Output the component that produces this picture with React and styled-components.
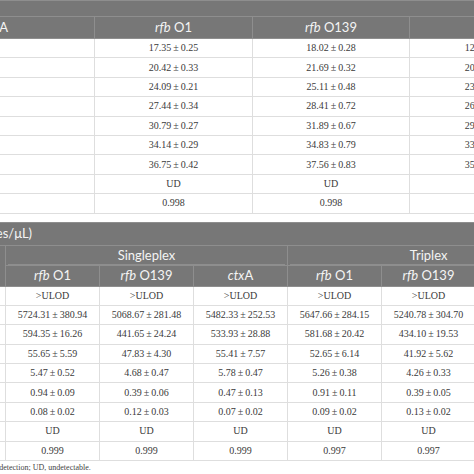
import React from 'react';
import styled, { createGlobalStyle } from 'styled-components';

const GlobalStyle = createGlobalStyle`
  html, body {
    margin: 0;
    padding: 0;
    background: #ffffff;
    overflow: hidden;
  }
`;

const Page = styled.div`
  width: 474px;
  height: 474px;
  overflow: hidden;
  background: #ffffff;
`;

const Table = styled.table`
  border-collapse: collapse;
  table-layout: fixed;
  width: ${props => props.$width}px;
  margin-left: ${props => props.$offset}px;
  margin-top: ${props => props.$top || 0}px;
`;

const HeadCell = styled.th`
  background: #777777;
  color: #f4f4f4;
  font-family: Lato, "Open Sans", sans-serif;
  font-weight: 400;
  font-size: 13px;
  line-height: 15px;
  text-align: center;
  padding: 0 4px;
  height: ${props => props.$height}px;
  border: 1px solid #8e8e8e;
  white-space: nowrap;
  overflow: visible;
  vertical-align: middle;
`;

const GroupCell = styled(HeadCell)`
  border-bottom: none;
  background-image: linear-gradient(#8e8e8e, #8e8e8e);
  background-size: calc(100% - 4px) 1px;
  background-position: center bottom;
  background-repeat: no-repeat;
`;

const EdgeLine = styled.div`
  display: flex;
  justify-content: flex-end;
  padding-right: ${props => props.$gap}px;
  white-space: nowrap;
`;

const Cell = styled.td`
  font-family: "Liberation Serif", "Times New Roman", serif;
  font-size: 10px;
  line-height: 12px;
  color: #3a3a3a;
  text-align: ${props => (props.$lead ? 'left' : 'center')};
  height: 18.4px;
  padding: 0 ${props => (props.$lead ? 8 : 2)}px;
  border: 1px solid #dedede;
  white-space: nowrap;
  overflow: hidden;
`;

const Gene = styled.span`
  font-style: italic;
`;

const Note = styled.div`
  font-family: "Liberation Serif", "Times New Roman", serif;
  font-size: 8px;
  line-height: 10px;
  color: #444444;
  margin-top: 2px;
  margin-left: -73px;
  white-space: nowrap;
`;

const Label = ({ gene, rest }) => (
  <>
    <Gene>{gene}</Gene>
    {rest}
  </>
);

const pm = (a, b) => `${a}\u2009±\u2009${b}`;

const ctTable = [
  ['10⁷', pm('17.35', '0.25'), pm('18.02', '0.28'), pm('12.63', '0.19')],
  ['10⁶', pm('20.42', '0.33'), pm('21.69', '0.32'), pm('20.08', '0.24')],
  ['10⁵', pm('24.09', '0.21'), pm('25.11', '0.48'), pm('23.42', '0.31')],
  ['10⁴', pm('27.44', '0.34'), pm('28.41', '0.72'), pm('26.77', '0.28')],
  ['10³', pm('30.79', '0.27'), pm('31.89', '0.67'), pm('29.95', '0.36')],
  ['10²', pm('34.14', '0.29'), pm('34.83', '0.79'), pm('33.18', '0.41')],
  ['10¹', pm('36.75', '0.42'), pm('37.56', '0.83'), pm('35.87', '0.52')],
  ['10⁰', 'UD', 'UD', 'UD'],
  ['R²', '0.998', '0.998', '0.997'],
];

const copyTable = [
  ['10⁷', '>ULOD', '>ULOD', '>ULOD', '>ULOD', '>ULOD', '>ULOD'],
  ['10⁶', pm('5724.31', '380.94'), pm('5068.67', '281.48'), pm('5482.33', '252.53'), pm('5647.66', '284.15'), pm('5240.78', '304.70'), pm('5391.02', '276.41')],
  ['10⁵', pm('594.35', '16.26'), pm('441.65', '24.24'), pm('533.93', '28.88'), pm('581.68', '20.42'), pm('434.10', '19.53'), pm('522.47', '25.16')],
  ['10⁴', pm('55.65', '5.59'), pm('47.83', '4.30'), pm('55.41', '7.57'), pm('52.65', '6.14'), pm('41.92', '5.62'), pm('50.38', '6.07')],
  ['10³', pm('5.47', '0.52'), pm('4.68', '0.47'), pm('5.78', '0.47'), pm('5.26', '0.38'), pm('4.26', '0.33'), pm('5.11', '0.42')],
  ['10²', pm('0.94', '0.09'), pm('0.39', '0.06'), pm('0.47', '0.13'), pm('0.91', '0.11'), pm('0.39', '0.05'), pm('0.44', '0.09')],
  ['10¹', pm('0.08', '0.02'), pm('0.12', '0.03'), pm('0.07', '0.02'), pm('0.09', '0.02'), pm('0.13', '0.02'), pm('0.08', '0.01')],
  ['10⁰', 'UD', 'UD', 'UD', 'UD', 'UD', 'UD'],
  ['R²', '0.999', '0.999', '0.999', '0.997', '0.997', '0.998'],
];

const TopTable = () => (
  <Table $width={635} $offset={-66}>
    <colgroup>
      <col style={{ width: 160 }} />
      <col style={{ width: 158 }} />
      <col style={{ width: 157 }} />
      <col style={{ width: 160 }} />
    </colgroup>
    <thead>
      <tr>
        <HeadCell colSpan={4} $height={15} />
      </tr>
      <tr>
        <HeadCell $height={21}>
          <EdgeLine $gap={82}>
            <span>Standard/<Gene>ctx</Gene>A</span>
          </EdgeLine>
        </HeadCell>
        <HeadCell $height={21}><Label gene="rfb" rest=" O1" /></HeadCell>
        <HeadCell $height={21}><Label gene="rfb" rest=" O139" /></HeadCell>
        <HeadCell $height={21}><Label gene="ctx" rest="A" /></HeadCell>
      </tr>
    </thead>
    <tbody>
      {ctTable.map(row => (
        <tr key={row[0]}>
          {row.map((v, i) => <Cell key={i} $lead={i === 0}>{v}</Cell>)}
        </tr>
      ))}
    </tbody>
  </Table>
);

const BottomTable = () => (
  <Table $width={664} $offset={-95} $top={8}>
    <colgroup>
      <col style={{ width: 100 }} />
      {[0, 1, 2, 3, 4, 5].map(i => <col key={i} style={{ width: 94 }} />)}
    </colgroup>
    <thead>
      <tr>
        <HeadCell colSpan={7} $height={22}>
          <EdgeLine $gap={533}>
            <span>Standard concentration (copies/μL)</span>
          </EdgeLine>
        </HeadCell>
      </tr>
      <tr>
        <HeadCell rowSpan={2} $height={19} />
        <GroupCell colSpan={3} $height={19}>Singleplex</GroupCell>
        <GroupCell colSpan={3} $height={19}>Triplex</GroupCell>
      </tr>
      <tr>
        <HeadCell $height={20}><Label gene="rfb" rest=" O1" /></HeadCell>
        <HeadCell $height={20}><Label gene="rfb" rest=" O139" /></HeadCell>
        <HeadCell $height={20}><Label gene="ctx" rest="A" /></HeadCell>
        <HeadCell $height={20}><Label gene="rfb" rest=" O1" /></HeadCell>
        <HeadCell $height={20}><Label gene="rfb" rest=" O139" /></HeadCell>
        <HeadCell $height={20}><Label gene="ctx" rest="A" /></HeadCell>
      </tr>
    </thead>
    <tbody>
      {copyTable.map(row => (
        <tr key={row[0]}>
          {row.map((v, i) => <Cell key={i} $lead={i === 0}>{v}</Cell>)}
        </tr>
      ))}
    </tbody>
  </Table>
);

export default function App() {
  return (
    <Page>
      <GlobalStyle />
      <TopTable />
      <BottomTable />
      <Note>ULOD, upper limit of detection; UD, undetectable.</Note>
    </Page>
  );
}
